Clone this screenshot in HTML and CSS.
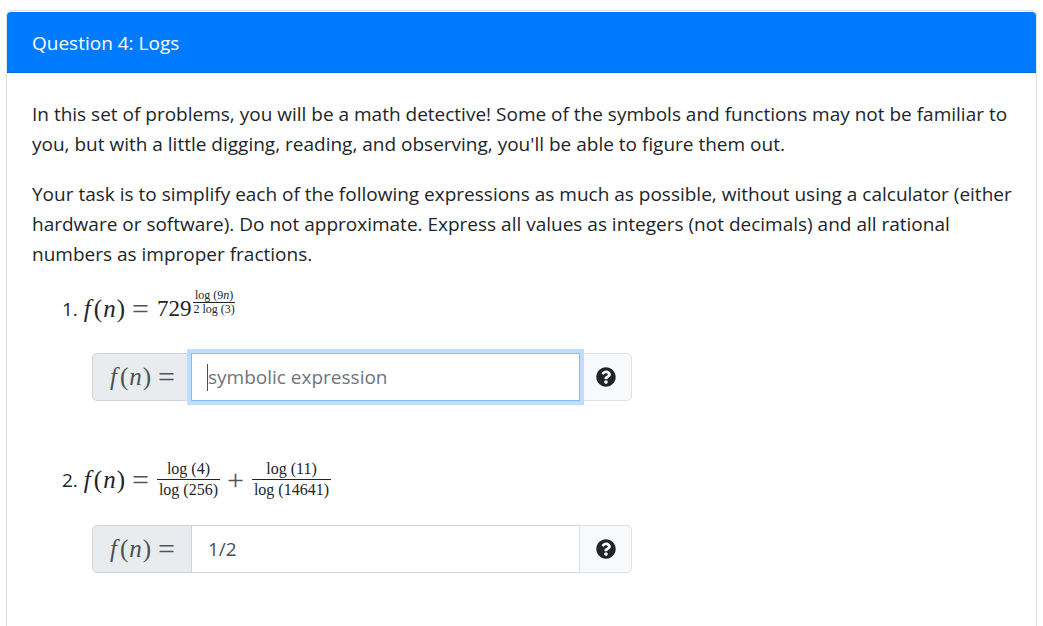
FILE: index.html
```html
<!DOCTYPE html>
<html lang="en">
<head>
<meta charset="utf-8">
<title>Question 4: Logs</title>
<link rel="stylesheet" href="styles.css">
</head>
<body>
<main class="card">
  <h1 class="card-header">Question 4: Logs</h1>
  <div class="card-body">
    <p>In this set of problems, you will be a math detective! Some of the symbols and functions may not be familiar to you, but with a little digging, reading, and observing, you'll be able to figure them out.</p>
    <p>Your task is to simplify each of the following expressions as much as possible, without using a calculator (either hardware or software). Do not approximate. Express all values as integers (not decimals) and all rational numbers as improper fractions.</p>
    <ol class="problems">
      <li class="problem">
        <div class="expression"><span class="number">1.</span>
          <span class="math"><span class="fn"><i class="f">f</i>(<i>n</i>)</span><span class="rel">=</span>729<span class="frac exponent"><span class="num">log (9<i>n</i>)</span><span class="den">2 log (3)</span></span></span>
        </div>
        <div class="input-group">
          <label class="prefix math" for="answer1"><span class="fn"><i class="f">f</i>(<i>n</i>)</span><span class="rel">=</span></label>
          <input class="answer focused" id="answer1" type="text" placeholder="symbolic expression">
          <button class="help" type="button" aria-label="Help"><svg viewBox="0 0 512 512" class="icon"><path d="M504 256c0 137-111 248-248 248S8 393 8 256 119 8 256 8s248 111 248 248zM262.700 90c-54.500 0-89.300 23-116.500 63.800-3.500 5.300-2.400 12.400 2.700 16.300l34.700 26.300c5.200 3.900 12.600 3 16.700-2.100 17.900-22.700 30.100-35.800 57.300-35.800 20.400 0 45.700 13.100 45.700 33 0 15-12.400 22.700-32.500 34C247.100 238.500 216 254.900 216 296v4c0 6.600 5.400 12 12 12h56c6.600 0 12-5.400 12-12v-1.300c0-28.500 83.200-29.600 83.200-106.700 0-58-60.200-102-116.500-102zM256 338c-25.400 0-46 20.600-46 46s20.600 46 46 46 46-20.600 46-46-20.600-46-46-46z"/></svg></button>
        </div>
      </li>
      <li class="problem">
        <div class="expression"><span class="number">2.</span>
          <span class="math"><span class="fn"><i class="f">f</i>(<i>n</i>)</span><span class="rel">=</span><span class="frac"><span class="num">log (4)</span><span class="den">log (256)</span></span><span class="rel">+</span><span class="frac"><span class="num">log (11)</span><span class="den">log (14641)</span></span></span>
        </div>
        <div class="input-group">
          <label class="prefix math" for="answer2"><span class="fn"><i class="f">f</i>(<i>n</i>)</span><span class="rel">=</span></label>
          <input class="answer" id="answer2" type="text" value="1/2">
          <button class="help" type="button" aria-label="Help"><svg viewBox="0 0 512 512" class="icon"><path d="M504 256c0 137-111 248-248 248S8 393 8 256 119 8 256 8s248 111 248 248zM262.700 90c-54.500 0-89.300 23-116.500 63.800-3.500 5.300-2.400 12.400 2.700 16.300l34.700 26.300c5.200 3.900 12.600 3 16.700-2.100 17.900-22.700 30.100-35.800 57.300-35.800 20.400 0 45.700 13.100 45.700 33 0 15-12.400 22.700-32.500 34C247.100 238.500 216 254.900 216 296v4c0 6.600 5.400 12 12 12h56c6.600 0 12-5.400 12-12v-1.300c0-28.500 83.200-29.600 83.200-106.700 0-58-60.200-102-116.500-102zM256 338c-25.400 0-46 20.600-46 46s20.600 46 46 46 46-20.600 46-46-20.600-46-46-46z"/></svg></button>
        </div>
      </li>
    </ol>
  </div>
</main>
</body>
</html>
```
FILE: styles.css
```css
* { box-sizing: border-box; }
body {
  margin: 0;
  padding: 10px 6px 0;
  background: #fff;
  color: #212529;
  font: 19px/30px "Open Sans", "Noto Sans", sans-serif;
}
.card {
  min-height: calc(100vh - 10px);
  padding-top: 1px;
  border: 1px solid #dfdfdf;
  border-bottom: 0;
  border-radius: 5px 5px 0 0;
}
.card-header {
  margin: 0;
  padding: 16px 25px 14px;
  background: #007bff;
  border-bottom: 1px solid #006bde;
  border-radius: 4px 4px 0 0;
  color: #fff;
  font-size: 19px;
  font-weight: 400;
  line-height: 30px;
}
.card-body { padding: 26px 18px 26px 25px; }
p { margin: 0 0 20px; }
.problems { margin: 0; padding: 0 0 0 30px; list-style: none; }
.problem { margin-bottom: 58px; }
.problem:last-child { margin-bottom: 0; }
.expression { display: flex; align-items: center; gap: 6px; margin-bottom: 25px; }
.math { display: flex; align-items: center; font-family: "Liberation Serif", serif; font-size: 23px; }
.fn { display: flex; align-items: baseline; gap: 1px; font-size: 25px; }
.f { margin-right: 2px; }
.rel { margin: 0 8px 0 7px; font-size: 30px; color: #50545a; }
.frac { display: flex; flex-direction: column; text-align: center; font-size: 16px; line-height: 20px; }
.num { padding: 0 2px; border-bottom: 1px solid currentColor; }
.den { padding: 0 2px; }
.exponent { margin: 0 0 12px 2px; font-size: 12px; line-height: 13px; }
.exponent .num, .exponent .den { padding: 0; }
.input-group { display: flex; width: 540px; max-width: calc(100% - 30px); height: 48px; margin-left: 30px; }
.prefix { width: 100px; padding-left: 17px; background: #e9ecef; border: 1px solid #ced4da; border-radius: 5px 0 0 5px; color: #495057; }
.answer { flex: 1; min-width: 0; margin-left: -1px; padding: 0 16px; border: 1px solid #ced4da; border-radius: 0; outline: 0; background: #fff; color: #495057; font: inherit; }
.answer::placeholder { color: #6c757d; opacity: 1; }
.focused {
  z-index: 1;
  border-color: #80bdff;
  background: linear-gradient(#495057, #495057) 15px center / 1px 27px no-repeat #fff;
  box-shadow: 0 0 0 4px #bfdeff;
}
.help { width: 53px; margin-left: -1px; padding: 0; border: 1px solid #dfe2e5; border-radius: 0 5px 5px 0; background: #f8f9fa; color: #212529; }
.icon { display: block; width: 20px; height: 20px; margin: auto; fill: currentColor; }
```
